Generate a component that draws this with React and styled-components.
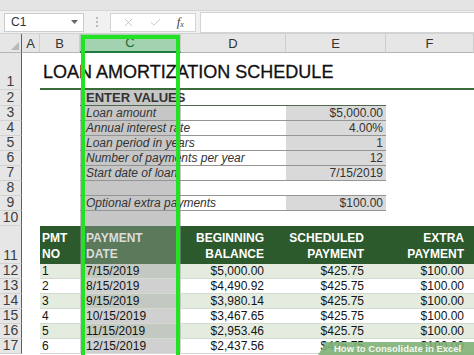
import React from 'react';
import styled, { createGlobalStyle } from 'styled-components';
import { X, Check } from 'lucide-react';

const GlobalStyle = createGlobalStyle`
  html, body { margin: 0; padding: 0; background: #fff; overflow: hidden; }
  body { font-family: "Liberation Sans", Arial, sans-serif; }
`;

const Window = styled.div`
  position: relative;
  width: 474px;
  height: 355px;
  overflow: hidden;
  background: #fff;
`;

const TopStrip = styled.div`
  height: 10px;
  background: #e4e4e4;
  border-bottom: 1px solid #d6d6d6;
`;

const FormulaRow = styled.div`
  height: 23px;
  display: flex;
  align-items: center;
  padding-left: 4px;
  background: #f1f1f1;
  box-sizing: border-box;
  border-bottom: 1px solid #d2d2d2;
`;

const NameBox = styled.div`
  width: 80px;
  height: 19px;
  box-sizing: border-box;
  background: #fff;
  border: 1px solid #cdcdcd;
  display: flex;
  align-items: center;
  justify-content: space-between;
  padding: 0 5px 0 6px;
  font-size: 12px;
  color: #333;
`;

const Dots = styled.div`
  width: 26px;
  display: flex;
  flex-direction: column;
  align-items: center;
  gap: 2px;
  span {
    width: 2px;
    height: 2px;
    border-radius: 50%;
    background: #a8a8a8;
  }
`;

const FxBox = styled.div`
  width: 86px;
  height: 19px;
  box-sizing: border-box;
  background: #fff;
  border: 1px solid #d4d4d4;
  display: flex;
  align-items: center;
  justify-content: space-around;
  padding: 0 4px;
`;

const Fx = styled.span`
  font-family: "Liberation Serif", "Times New Roman", serif;
  font-style: italic;
  font-size: 13px;
  color: #444;
  sub {
    font-size: 8px;
    vertical-align: -1px;
  }
`;

const FormulaInput = styled.div`
  flex: 1;
  height: 19px;
  margin-left: 4px;
  background: #fff;
  border: 1px solid #d4d4d4;
  border-right: none;
`;

const Sheet = styled.div`
  display: grid;
  grid-template-columns: 22px 18px 40px 101px 105px 100px 88px;
  grid-template-rows: 19px 37px 16px repeat(8, 15px) 38px repeat(6, 15px);
  font-size: 12px;
  color: #222;
`;

const Corner = styled.div`
  background: #e6e6e6;
  border-right: 1px solid #4f6b4f;
  border-bottom: 1px solid #b4b4b4;
  display: flex;
  align-items: flex-end;
  justify-content: flex-end;
  padding: 0 2px 2px 0;
  box-sizing: border-box;
`;

const ColHead = styled.div`
  background: ${p => (p.$active ? '#a3d2b0' : '#e6e6e6')};
  color: ${p => (p.$active ? '#1e6b36' : '#333')};
  border-right: 1px solid #cdcdcd;
  border-bottom: ${p => (p.$active ? '2px solid #1f7a3e' : '1px solid #b4b4b4')};
  box-sizing: border-box;
  display: flex;
  align-items: center;
  justify-content: center;
  font-size: 13px;
`;

const RowNum = styled.div`
  background: #e6e6e6;
  color: #3e3e3e;
  font-size: 14px;
  border-right: 1px solid #4f6b4f;
  border-bottom: 1px solid #d2d2d2;
  box-sizing: border-box;
  display: flex;
  align-items: flex-end;
  justify-content: center;
  line-height: 15px;
`;

const Blank = styled.div``;

const Title = styled.div`
  grid-column: 3 / 8;
  border-bottom: 2px solid #3b6b3b;
  display: flex;
  align-items: flex-end;
  padding: 0 0 5px 3px;
  font-size: 18px;
  color: #111;
  white-space: nowrap;
  -webkit-text-stroke: 0.3px #111;
`;

const InputCell = styled.div`
  box-sizing: border-box;
  display: flex;
  align-items: center;
  white-space: nowrap;
  background: ${p => p.$bg || 'transparent'};
  border-bottom: ${p => p.$line || 'none'};
  justify-content: ${p => (p.$right ? 'flex-end' : 'flex-start')};
  padding: ${p => (p.$right ? '0 3px 0 0' : '0 0 0 6px')};
  font-style: ${p => (p.$italic ? 'italic' : 'normal')};
  font-weight: ${p => (p.$bold ? 'bold' : 'normal')};
  font-size: ${p => (p.$bold ? '13px' : '12px')};
  color: #333;
`;

const HeadCell = styled.div`
  box-sizing: border-box;
  background: ${p => (p.$sel ? '#5b7a5b' : '#2c5a2c')};
  color: ${p => (p.$sel ? '#dcdcdc' : '#fff')};
  font-weight: bold;
  font-size: 12px;
  line-height: 16px;
  display: flex;
  flex-direction: column;
  justify-content: flex-end;
  align-items: ${p => (p.$right ? 'flex-end' : 'flex-start')};
  padding: ${p => (p.$right ? `0 ${p.$pr}px 2px 0` : `0 0 2px ${p.$pl}px`)};
`;

const DataCell = styled.div`
  box-sizing: border-box;
  background: ${p => (p.$sel ? (p.$alt ? '#c3c8c1' : '#d0d0d0') : p.$alt ? '#e3ecdf' : '#fff')};
  border-bottom: 1px solid #d3dbd0;
  display: flex;
  align-items: center;
  white-space: nowrap;
  justify-content: ${p => (p.$right ? 'flex-end' : 'flex-start')};
  padding: ${p => (p.$right ? `0 ${p.$pr}px 0 0` : `0 0 0 ${p.$pl}px`)};
  font-size: 12px;
  color: #141414;
`;

const SheetArea = styled.div`
  position: relative;
`;

const Selection = styled.div`
  position: absolute;
  left: 81px;
  top: 1px;
  width: 99px;
  height: 340px;
  box-sizing: border-box;
  border: 4px solid #23e223;
  pointer-events: none;
`;

const Watermark = styled.div`
  position: absolute;
  right: 0;
  bottom: 0;
  width: 156px;
  height: 13px;
  background: rgba(128, 176, 118, 0.9);
  clip-path: polygon(8px 0, 100% 0, 100% 100%, 0 100%);
  color: rgba(255, 255, 255, 0.92);
  font-size: 9.5px;
  font-weight: bold;
  line-height: 13px;
  padding-left: 16px;
  box-sizing: border-box;
  white-space: nowrap;
`;

const inputs = [
  ['Loan amount', '$5,000.00'],
  ['Annual interest rate', '4.00%'],
  ['Loan period in years', '1'],
  ['Number of payments per year', '12'],
  ['Start date of loan', '7/15/2019'],
  ['', ''],
  ['Optional extra payments', '$100.00'],
];

const payments = [
  ['1', '7/15/2019', '$5,000.00'],
  ['2', '8/15/2019', '$4,490.92'],
  ['3', '9/15/2019', '$3,980.14'],
  ['4', '10/15/2019', '$3,467.65'],
  ['5', '11/15/2019', '$2,953.46'],
  ['6', '12/15/2019', '$2,437.56'],
];

const line = '1px solid #959595';

export default function App() {
  return (
    <Window>
      <GlobalStyle />
      <TopStrip />
      <FormulaRow>
        <NameBox>
          <span>C1</span>
          <svg width="7" height="4" viewBox="0 0 7 4"><path d="M0 0h7L3.5 4z" fill="#666" /></svg>
        </NameBox>
        <Dots><span /><span /><span /></Dots>
        <FxBox>
          <X size={13} strokeWidth={1.4} color="#b4b4b4" />
          <Check size={13} strokeWidth={1.4} color="#b4b4b4" />
          <Fx>f<sub>x</sub></Fx>
        </FxBox>
        <FormulaInput />
      </FormulaRow>

      <SheetArea>
        <Sheet>
          <Corner>
            <svg width="8" height="8" viewBox="0 0 8 8"><path d="M8 0v8H0z" fill="#b8b8b8" /></svg>
          </Corner>
          {['A', 'B', 'C', 'D', 'E', 'F'].map(c => (
            <ColHead key={c} $active={c === 'C'}>{c}</ColHead>
          ))}

          <RowNum>1</RowNum>
          <Blank />
          <Title>LOAN AMORTIZATION SCHEDULE</Title>

          <RowNum>2</RowNum>
          <Blank />
          <Blank />
          <InputCell $bg="#c6c6c6" $bold $line="1px solid #4d6a4d">ENTER VALUES</InputCell>
          <InputCell $line="1px solid #4d6a4d" />
          <InputCell $line="1px solid #4d6a4d" />
          <Blank />

          {inputs.map(([label, value], i) => (
            <React.Fragment key={i}>
              <RowNum>{i + 3}</RowNum>
              <Blank />
              <Blank />
              <InputCell $bg="#c6c6c6" $italic $line={line}>{label}</InputCell>
              <InputCell $line={line} />
              <InputCell $bg={value ? '#d9d9d9' : undefined} $right $line={line}>{value}</InputCell>
              <Blank />
            </React.Fragment>
          ))}

          <RowNum>10</RowNum>
          <Blank />
          <Blank />
          <InputCell $bg="#c6c6c6" />
          <Blank />
          <Blank />
          <Blank />

          <RowNum>11</RowNum>
          <Blank />
          <HeadCell $pl={2}><span>PMT</span><span>NO</span></HeadCell>
          <HeadCell $sel $pl={6}><span>PAYMENT</span><span>DATE</span></HeadCell>
          <HeadCell $right $pr={22}><span>BEGINNING</span><span>BALANCE</span></HeadCell>
          <HeadCell $right $pr={22}><span>SCHEDULED</span><span>PAYMENT</span></HeadCell>
          <HeadCell $right $pr={10}><span>EXTRA</span><span>PAYMENT</span></HeadCell>

          {payments.map(([no, date, bal], i) => {
            const alt = i % 2 === 0;
            return (
              <React.Fragment key={no}>
                <RowNum>{i + 12}</RowNum>
                <Blank />
                <DataCell $alt={alt} $pl={2}>{no}</DataCell>
                <DataCell $alt={alt} $sel $pl={6}>{date}</DataCell>
                <DataCell $alt={alt} $right $pr={22}>{bal}</DataCell>
                <DataCell $alt={alt} $right $pr={22}>$425.75</DataCell>
                <DataCell $alt={alt} $right $pr={10}>$100.00</DataCell>
              </React.Fragment>
            );
          })}
        </Sheet>
        <Selection />
      </SheetArea>

      <Watermark>How to Consolidate in Excel</Watermark>
    </Window>
  );
}
